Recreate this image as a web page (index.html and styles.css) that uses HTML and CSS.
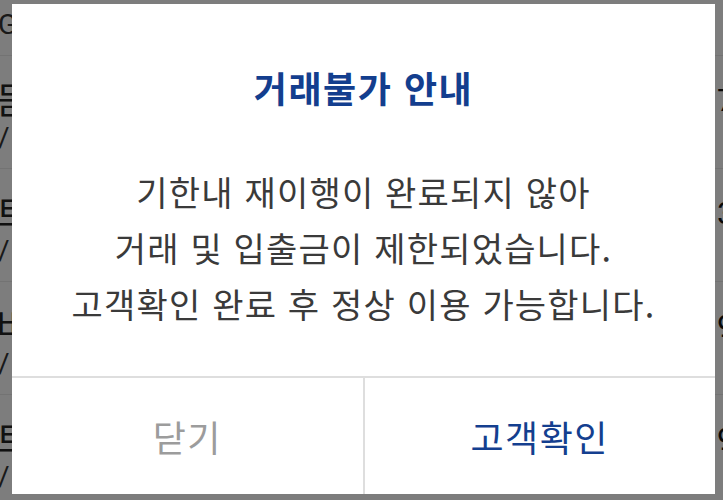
FILE: index.html
```html
<!DOCTYPE html>
<html lang="ko">
<head>
<meta charset="utf-8">
<title>거래불가 안내</title>
<link rel="stylesheet" href="styles.css">
</head>
<body>
<div class="screen">
  <ul class="list">
    <li class="row"><div class="row-text"><span class="name">&nbsp;</span><span class="sub">Gl</span></div><span class="num">&nbsp;</span></li>
    <li class="row"><div class="row-text"><span class="name">듬</span><span class="sub">/</span></div><span class="num">7</span></li>
    <li class="row"><div class="row-text"><span class="name">트</span><span class="sub">/</span></div><span class="num">3</span></li>
    <li class="row"><div class="row-text"><span class="name">비</span><span class="sub">/</span></div><span class="num">9</span></li>
    <li class="row"><div class="row-text"><span class="name">트</span><span class="sub">/</span></div><span class="num">9</span></li>
  </ul>
  <div class="overlay"></div>
  <div class="dialog" role="dialog">
    <div class="dialog-body">
      <h1 class="dialog-title">거래불가 안내</h1>
      <p class="dialog-msg">기한내 재이행이 완료되지 않아<br>거래 및 입출금이 제한되었습니다.<br>고객확인 완료 후 정상 이용 가능합니다.</p>
    </div>
    <div class="dialog-actions">
      <button class="btn btn-close">닫기</button>
      <button class="btn btn-confirm">고객확인</button>
    </div>
  </div>
</div>
</body>
</html>
```
FILE: styles.css
```css
* { box-sizing: border-box; }
html, body {
  margin: 0;
  padding: 0;
  width: 723px;
  height: 500px;
  overflow: hidden;
  background: #ffffff;
  font-family: "Noto Sans CJK KR", "Noto Sans", sans-serif;
}
.screen {
  position: relative;
  width: 723px;
  height: 500px;
  overflow: hidden;
}
.list {
  list-style: none;
  margin: -57px 0 0 0;
  padding: 0;
}
.row {
  height: 113px;
  display: flex;
  justify-content: space-between;
  align-items: flex-start;
  border-bottom: 1px solid #e6e6e6;
  background: #fafafa;
  padding-top: 24px;
}
.row-text {
  display: flex;
  flex-direction: column;
}
.name {
  font-size: 36px;
  line-height: 36px;
  color: #222;
  margin-left: -4px;
}
.sub {
  font-size: 28px;
  line-height: 32px;
  margin-top: 6px;
  color: #333;
  margin-left: -2px;
  font-family: "Roboto", "Noto Sans CJK KR", sans-serif;
}
.num {
  font-family: "Roboto", sans-serif;
  font-size: 32px;
  line-height: 40px;
  color: #111;
  margin-right: -12px;
  margin-top: 0;
}
.overlay {
  position: absolute;
  inset: 0;
  background: rgba(0, 0, 0, 0.5);
}
.dialog {
  position: absolute;
  left: 12px;
  top: 4px;
  width: 703px;
  height: 490px;
  background: #ffffff;
  display: flex;
  flex-direction: column;
}
.dialog-body {
  height: 372px;
  padding-top: 58px;
  text-align: center;
}
.dialog-title {
  margin: 0;
  font-size: 36px;
  letter-spacing: 1.5px;
  line-height: 50px;
  font-weight: 700;
  color: #133e8e;
}
.dialog-msg {
  margin: 52px 0 0 0;
  font-size: 34px;
  letter-spacing: 1.2px;
  line-height: 56px;
  font-weight: 400;
  color: #3a3a3a;
}
.dialog-actions {
  flex: 1;
  display: flex;
  border-top: 2px solid #dedede;
}
.btn {
  flex: 1;
  border: 0;
  background: #ffffff;
  font-family: "Noto Sans CJK KR", "Noto Sans", sans-serif;
  font-size: 36px;
  letter-spacing: 1.5px;
  padding: 0;
  margin: 0;
}
.btn-close {
  color: #9c9c9c;
  border-right: 2px solid #dedede;
}
.btn-confirm {
  color: #143f8f;
}
```
